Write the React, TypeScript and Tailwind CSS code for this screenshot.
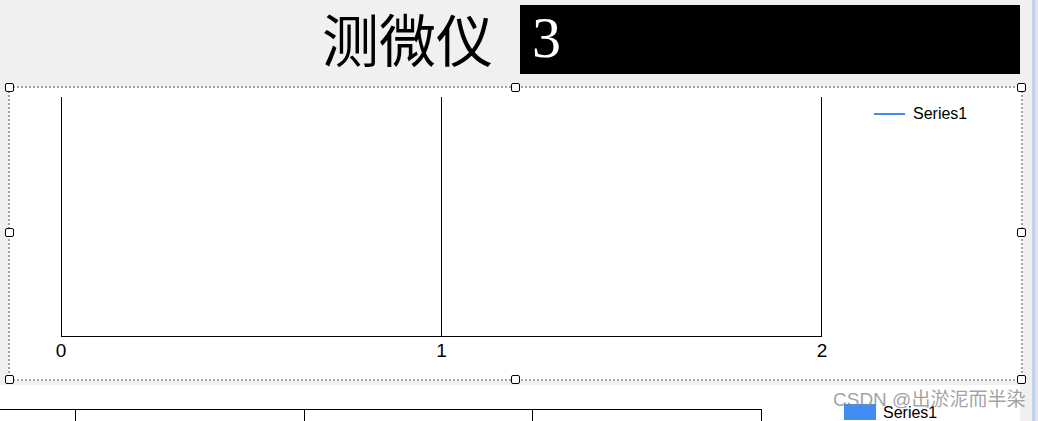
import React from "react";

const Handle = ({ pos }: { pos: string }) => (
  <div className={`absolute w-[9px] h-[9px] bg-white border border-black rounded-[2px] ${pos}`} />
);

export default function App() {
  return (
    <div className="w-[1038px] h-[421px] bg-[#f0f0f0] flex overflow-hidden relative" style={{ fontFamily: '"Liberation Sans", Arial, sans-serif' }}>
      <div className="w-[1032px] flex flex-col">
        {/* header */}
        <div className="h-[86px] flex items-start pt-[5px]">
          <div className="w-[520px] h-[69px] flex items-center justify-end pr-[27px]">
            <span className="text-[57px] leading-none text-black whitespace-nowrap -mt-[4px]" style={{ fontFamily: '"Noto Sans CJK SC", sans-serif' }}>测微仪</span>
          </div>
          <div className="w-[500px] h-[69px] bg-black flex items-center pl-[12px]">
            <span className="text-white text-[58px] leading-none -mt-[4px]" style={{ fontFamily: '"Liberation Serif", serif' }}>3</span>
          </div>
        </div>
        {/* chart panel */}
        <div className="relative ml-[8px] w-[1015px] h-[296px]">
          <div className="w-full h-full border-2 border-dotted border-[#a0a0a0] bg-white flex pl-[51px] pt-[9px]">
            <div className="flex flex-col">
              <div className="w-[761px] h-[240px] border-l border-b border-black grid grid-cols-2">
                <div className="border-r border-black" />
                <div className="border-r border-black" />
              </div>
              <div className="flex justify-between w-[761px] mt-[4px] text-[19px] leading-none text-black">
                <div className="w-0 flex justify-center"><span>0</span></div>
                <div className="w-0 flex justify-center"><span>1</span></div>
                <div className="w-0 flex justify-center"><span>2</span></div>
              </div>
            </div>
            <div className="ml-[52px] mt-[7px] h-[20px] flex items-center">
              <div className="w-[31px] h-[2px] bg-[#418cf0]" />
              <span className="ml-[8px] text-[16px] text-black whitespace-nowrap">Series1</span>
            </div>
          </div>
          <Handle pos="-left-[3px] -top-[3px]" />
          <Handle pos="left-[503px] -top-[3px]" />
          <Handle pos="-right-[3px] -top-[3px]" />
          <Handle pos="-left-[3px] top-[142px]" />
          <Handle pos="-right-[3px] top-[142px]" />
          <Handle pos="-left-[3px] -bottom-[3px]" />
          <Handle pos="left-[503px] -bottom-[3px]" />
          <Handle pos="-right-[3px] -bottom-[3px]" />
        </div>
        {/* bottom */}
        <div className="mt-[4px] w-[1020px] flex-1 bg-white flex relative">
          <div className="w-[762px] pt-[24px] flex flex-col">
            <div className="flex-1 flex border-t border-black">
              <div className="w-[76px] border-r border-black" />
              <div className="w-[229px] border-r border-black" />
              <div className="w-[228px] border-r border-black" />
              <div className="w-[229px] border-r border-black" />
            </div>
          </div>
          <div className="ml-[82px] pt-[19px] flex items-start">
            <div className="w-[32px] h-[16px] bg-[#418cf0]" />
            <span className="ml-[7px] text-[16px] leading-[16px] text-black mt-[1px] whitespace-nowrap">Series1</span>
          </div>
          <div className="absolute left-[833px] top-[5px] text-[19px] leading-none text-[#8a8a8a]/80 whitespace-nowrap" style={{ fontFamily: '"Liberation Sans", "Noto Sans CJK SC", sans-serif' }}>
            CSDN @出淤泥而半染
          </div>
        </div>
      </div>
      <div className="w-[3px] bg-[#c3d3ea]" />
      <div className="flex-1 bg-[#e4e4e4]" />
    </div>
  );
}
